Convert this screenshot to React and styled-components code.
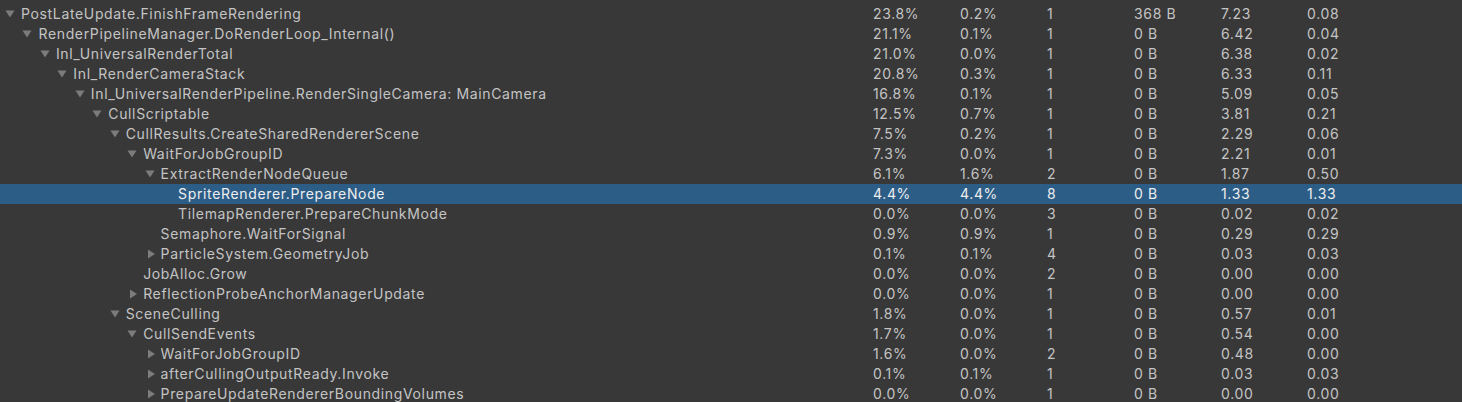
import React from 'react';
import styled, { createGlobalStyle } from 'styled-components';

const GlobalStyle = createGlobalStyle`
  html, body {
    margin: 0;
    background: #383838;
    height: 100%;
    overflow: hidden;
  }
  body {
    font-family: Inter, "Noto Sans", sans-serif;
  }
`;

const INDENT = 17.45;

const rows = [
  { level: 0, name: 'Gfx.PresentFrame', state: 'open', cols: ['24.1%', '0.1%', '1', '0 B', '7.31', '0.03'] },
  { level: 0, name: 'PostLateUpdate.FinishFrameRendering', state: 'open', cols: ['23.8%', '0.2%', '1', '368 B', '7.23', '0.08'] },
  { level: 1, name: 'RenderPipelineManager.DoRenderLoop_Internal()', state: 'open', cols: ['21.1%', '0.1%', '1', '0 B', '6.42', '0.04'] },
  { level: 2, name: 'Inl_UniversalRenderTotal', state: 'open', cols: ['21.0%', '0.0%', '1', '0 B', '6.38', '0.02'] },
  { level: 3, name: 'Inl_RenderCameraStack', state: 'open', cols: ['20.8%', '0.3%', '1', '0 B', '6.33', '0.11'] },
  { level: 4, name: 'Inl_UniversalRenderPipeline.RenderSingleCamera: MainCamera', state: 'open', cols: ['16.8%', '0.1%', '1', '0 B', '5.09', '0.05'] },
  { level: 5, name: 'CullScriptable', state: 'open', cols: ['12.5%', '0.7%', '1', '0 B', '3.81', '0.21'] },
  { level: 6, name: 'CullResults.CreateSharedRendererScene', state: 'open', cols: ['7.5%', '0.2%', '1', '0 B', '2.29', '0.06'] },
  { level: 7, name: 'WaitForJobGroupID', state: 'open', cols: ['7.3%', '0.0%', '1', '0 B', '2.21', '0.01'] },
  { level: 8, name: 'ExtractRenderNodeQueue', state: 'open', cols: ['6.1%', '1.6%', '2', '0 B', '1.87', '0.50'] },
  { level: 9, name: 'SpriteRenderer.PrepareNode', state: 'leaf', selected: true, cols: ['4.4%', '4.4%', '8', '0 B', '1.33', '1.33'] },
  { level: 9, name: 'TilemapRenderer.PrepareChunkMode', state: 'leaf', cols: ['0.0%', '0.0%', '3', '0 B', '0.02', '0.02'] },
  { level: 8, name: 'Semaphore.WaitForSignal', state: 'leaf', cols: ['0.9%', '0.9%', '1', '0 B', '0.29', '0.29'] },
  { level: 8, name: 'ParticleSystem.GeometryJob', state: 'closed', cols: ['0.1%', '0.1%', '4', '0 B', '0.03', '0.03'] },
  { level: 7, name: 'JobAlloc.Grow', state: 'leaf', cols: ['0.0%', '0.0%', '2', '0 B', '0.00', '0.00'] },
  { level: 7, name: 'ReflectionProbeAnchorManagerUpdate', state: 'closed', cols: ['0.0%', '0.0%', '1', '0 B', '0.00', '0.00'] },
  { level: 6, name: 'SceneCulling', state: 'open', cols: ['1.8%', '0.0%', '1', '0 B', '0.57', '0.01'] },
  { level: 7, name: 'CullSendEvents', state: 'open', cols: ['1.7%', '0.0%', '1', '0 B', '0.54', '0.00'] },
  { level: 8, name: 'WaitForJobGroupID', state: 'closed', cols: ['1.6%', '0.0%', '2', '0 B', '0.48', '0.00'] },
  { level: 8, name: 'afterCullingOutputReady.Invoke', state: 'closed', cols: ['0.1%', '0.1%', '1', '0 B', '0.03', '0.03'] },
  { level: 8, name: 'PrepareUpdateRendererBoundingVolumes', state: 'closed', cols: ['0.0%', '0.0%', '1', '0 B', '0.00', '0.00'] },
];

function Foldout({ state }) {
  if (state === 'open') {
    return (
      <Toggle>
        <svg width="10" height="8" viewBox="0 0 10 8">
          <polygon points="0.5,0.5 9.5,0.5 5,7.5" fill="#7c7c7c" />
        </svg>
      </Toggle>
    );
  }
  if (state === 'closed') {
    return (
      <Toggle>
        <svg width="10" height="10" viewBox="0 0 10 10" style={{ marginLeft: 2 }}>
          <polygon points="1,0.5 8,5 1,9.5" fill="#7c7c7c" />
        </svg>
      </Toggle>
    );
  }
  return <Toggle />;
}

export default function App() {
  return (
    <>
      <GlobalStyle />
      <Tree>
        {rows.map((r, i) => (
          <Row key={i} selected={r.selected}>
            <NameCell style={{ paddingLeft: 4 + r.level * INDENT }}>
              <Foldout state={r.state} />
              <Name>{r.name}</Name>
            </NameCell>
            {r.cols.map((c, j) => (
              <Cell key={j}>{c}</Cell>
            ))}
          </Row>
        ))}
      </Tree>
    </>
  );
}

const Tree = styled.div`
  margin-top: -16px;
  display: flex;
  flex-direction: column;
`;

const Row = styled.div`
  display: grid;
  grid-template-columns: 873px 87px 87px 87px 87px 86px 1fr;
  height: 20px;
  line-height: 20px;
  font-size: 14px;
  letter-spacing: 0.65px;
  color: ${props => (props.selected ? '#eeeeee' : '#c4c4c4')};
  background: ${props => (props.selected ? '#2c5d87' : 'transparent')};
  white-space: nowrap;
`;

const NameCell = styled.div`
  display: flex;
  align-items: center;
  overflow: hidden;
`;

const Toggle = styled.div`
  width: 17px;
  height: 20px;
  flex: none;
  display: flex;
  align-items: center;
  padding-left: 1px;
  box-sizing: border-box;
`;

const Name = styled.span`
  overflow: hidden;
`;

const Cell = styled.div`
  overflow: hidden;
`;
